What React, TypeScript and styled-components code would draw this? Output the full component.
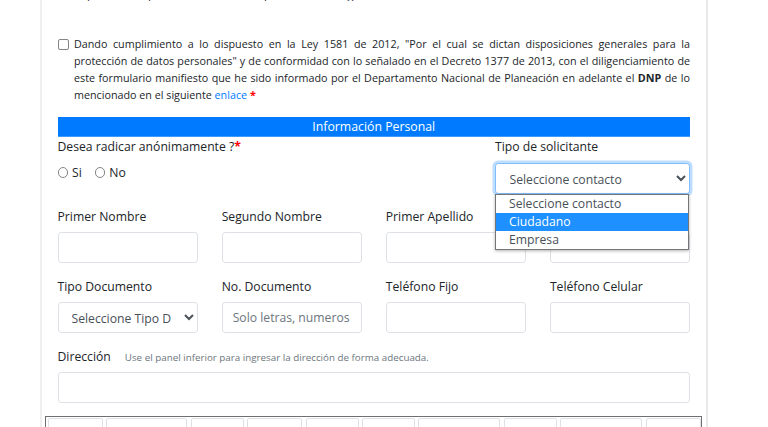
import styled, { createGlobalStyle } from "styled-components";

const GlobalStyle = createGlobalStyle`
  html, body {
    margin: 0;
    height: 427px;
    overflow: hidden;
    background: #fff;
  }
  * {
    box-sizing: border-box;
  }
`;

const Page = styled.div`
  height: 427px;
  overflow: hidden;
  padding: 0 60px 0 40px;
  font-family: "Open Sans", "Noto Sans", sans-serif;
  font-size: 12.8px;
  color: #212529;
`;

const Card = styled.main`
  width: 668px;
  height: 427px;
  padding: 0 16px 0 15.5px;
  border-left: 2px solid #f0f0f0;
  border-right: 2px solid #e8e8e8;
  position: relative;
`;

const ClippedLine = styled.div`
  height: 1px;
  margin-bottom: 34.5px;
  overflow: hidden;
  display: flex;
  align-items: flex-end;
  line-height: 1;
  font-size: 11.5px;
  padding-left: 29.5px;
  gap: 54px;

  span:nth-child(3) {
    margin-left: 55px;
  }
  span:nth-child(4) {
    margin-left: 22px;
  }
`;

const Consent = styled.label`
  display: flex;
  gap: 5.5px;
  font-size: 10.75px;
  line-height: 17px;
  text-align: justify;
`;

const CheckBox = styled.input`
  appearance: none;
  flex: none;
  width: 10.5px;
  height: 10.5px;
  margin: 3.5px 0 0 0.5px;
  border: 1px solid #858585;
  border-radius: 2px;
  background: #fff;
`;

const Link = styled.a`
  color: #007bff;
  text-decoration: none;
`;

const Required = styled.span`
  color: #f00;
  font-weight: 700;
`;

const SectionBar = styled.div`
  height: 19.5px;
  margin-top: 13.5px;
  background: #007bff;
  border-bottom: 1px solid #3d9bff;
  color: #fff;
  font-size: 12.3px;
  line-height: 19px;
  text-align: center;
`;

const TopRow = styled.div`
  display: grid;
  grid-template-columns: 1fr 195px;
  gap: 0;
  height: 56.5px;
  margin-bottom: 14px;
`;

const Label = styled.div`
  height: 19px;
  font-size: 12.2px;
  line-height: 19px;
  white-space: nowrap;
`;

const RadioRow = styled.div`
  display: flex;
  align-items: center;
  margin-top: 7.5px;
  height: 19px;
`;

const RadioItem = styled.label`
  display: flex;
  align-items: center;
  gap: 4px;
  margin-right: 13px;
  font-size: 12.2px;
`;

const Radio = styled.input`
  appearance: none;
  width: 10.5px;
  height: 10.5px;
  margin: 0;
  border: 1px solid #858585;
  border-radius: 50%;
  background: #fff;
`;

const SelectWrap = styled.div`
  position: relative;
  margin-top: 7.5px;
`;

const Select = styled.select<{ $focused?: boolean }>`
  display: block;
  width: 100%;
  height: 31px;
  padding: 2px 0 0 ${({ $focused }) => ($focused ? "9.5px" : "9px")};
  background: #fff;
  border: 1px solid ${({ $focused }) => ($focused ? "#80bdff" : "#dde1e6")};
  border-radius: 3.2px;
  box-shadow: ${({ $focused }) =>
    $focused ? "0 0 0 2.5px rgba(0, 123, 255, 0.25)" : "none"};
  color: #495057;
  font-family: inherit;
  font-size: 12.2px;
  outline: none;
`;

const OptionList = styled.ul`
  position: absolute;
  z-index: 2;
  top: 30.5px;
  left: 0;
  right: 1px;
  margin: 0;
  padding: 0;
  list-style: none;
  background: #fff;
  border: 1px solid #767676;
  box-shadow: 0 1px 3px rgba(0, 0, 0, 0.3);
`;

const OptionRow = styled.li<{ $active?: boolean }>`
  height: 18px;
  padding-left: 13px;
  background: ${({ $active }) => ($active ? "#1e90ff" : "#fff")};
  color: ${({ $active }) => ($active ? "#fff" : "#495057")};
  font-size: 12.2px;
  line-height: 18px;
`;

const FieldGrid = styled.div`
  display: grid;
  grid-template-columns: repeat(4, 1fr);
  gap: 14px 24px;
  margin-bottom: 14px;
`;

const Field = styled.div`
  min-width: 0;
`;

const TextInput = styled.input`
  display: block;
  width: 100%;
  height: 31px;
  margin-top: 6px;
  padding: 0 10px;
  background: #fff;
  border: 1px solid #dde1e6;
  border-radius: 3.2px;
  color: #495057;
  font-family: inherit;
  font-size: 12.2px;
  outline: none;

  &::placeholder {
    color: #6c757d;
    opacity: 1;
  }
`;

const FieldSelect = styled(Select)`
  margin-top: 6px;
`;

const AddressLabel = styled.div`
  display: flex;
  align-items: baseline;
  gap: 14px;
  height: 19px;
  font-size: 12.2px;
  line-height: 19px;
`;

const Hint = styled.small`
  color: #6c757d;
  font-size: 9.8px;
`;

const AddressPad = styled.div`
  display: grid;
  grid-template-columns: 55.5px 81px 53px 55px 53px 53px 82px 53px 82px 55px;
  gap: 3.4px;
  width: 657px;
  height: 40px;
  margin: 12.5px 0 0 -12.5px;
  padding: 1.5px 1.5px 0;
  border: 1px solid #6f6f6f;
  border-bottom: 0;
`;

const PadCell = styled.div`
  height: 40px;
  border: 1px solid #dee2e6;
  border-radius: 2px;
`;

const padCells = Array.from({ length: 10 }, (_, i) => i);

export default function App() {
  return (
    <Page>
      <GlobalStyle />
      <Card>
        <ClippedLine aria-hidden>
          <span>p</span>
          <span>p</span>
          <span>p</span>
          <span>g</span>
        </ClippedLine>

        <Consent>
          <CheckBox type="checkbox" />
          <span>
            Dando cumplimiento a lo dispuesto en la Ley 1581 de 2012, "Por el
            cual se dictan disposiciones generales para la protección de datos
            personales" y de conformidad con lo señalado en el Decreto 1377 de
            2013, con el diligenciamiento de este formulario manifiesto que he
            sido informado por el Departamento Nacional de Planeación en
            adelante el <strong>DNP</strong> de lo mencionado en el siguiente{" "}
            <Link href="#">enlace</Link> <Required>*</Required>
          </span>
        </Consent>

        <SectionBar>Información Personal</SectionBar>

        <TopRow>
          <div>
            <Label>
              Desea radicar anónimamente ?<Required>*</Required>
            </Label>
            <RadioRow>
              <RadioItem>
                <Radio type="radio" name="anon" />
                Si
              </RadioItem>
              <RadioItem>
                <Radio type="radio" name="anon" />
                No
              </RadioItem>
            </RadioRow>
          </div>
          <div>
            <Label>Tipo de solicitante</Label>
            <SelectWrap>
              <Select $focused>
                <option>Seleccione contacto</option>
              </Select>
              <OptionList>
                <OptionRow>Seleccione contacto</OptionRow>
                <OptionRow $active>Ciudadano</OptionRow>
                <OptionRow>Empresa</OptionRow>
              </OptionList>
            </SelectWrap>
          </div>
        </TopRow>

        <FieldGrid>
          <Field>
            <Label>Primer Nombre</Label>
            <TextInput />
          </Field>
          <Field>
            <Label>Segundo Nombre</Label>
            <TextInput />
          </Field>
          <Field>
            <Label>Primer Apellido</Label>
            <TextInput />
          </Field>
          <Field>
            <Label>Segundo Apellido</Label>
            <TextInput />
          </Field>
          <Field>
            <Label>Tipo Documento</Label>
            <FieldSelect>
              <option>Seleccione Tipo D</option>
            </FieldSelect>
          </Field>
          <Field>
            <Label>No. Documento</Label>
            <TextInput placeholder="Solo letras, numeros" />
          </Field>
          <Field>
            <Label>Teléfono Fijo</Label>
            <TextInput />
          </Field>
          <Field>
            <Label>Teléfono Celular</Label>
            <TextInput />
          </Field>
        </FieldGrid>

        <AddressLabel>
          Dirección
          <Hint>Use el panel inferior para ingresar la dirección de forma adecuada.</Hint>
        </AddressLabel>
        <TextInput />

        <AddressPad>
          {padCells.map((cell) => (
            <PadCell key={cell} />
          ))}
        </AddressPad>
      </Card>
    </Page>
  );
}
